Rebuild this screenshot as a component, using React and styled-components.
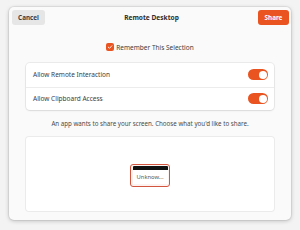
import styled, { createGlobalStyle } from "styled-components";

const GlobalStyle = createGlobalStyle`
  html, body {
    margin: 0;
    padding: 0;
    background: #f3f3f3;
  }
  body {
    font-family: "Noto Sans", "Open Sans", sans-serif;
    color: #3d3d3d;
  }
`;

const Page = styled.div`
  width: 300px;
  height: 230px;
  padding: 7px 9px 10px;
  box-sizing: border-box;
`;

const Dialog = styled.div`
  width: 282px;
  height: 213px;
  background: #fafafa;
  border-radius: 5px;
  box-shadow: 0 1px 4px rgba(0, 0, 0, 0.22), 0 0 0 1px rgba(0, 0, 0, 0.05);
  display: flex;
  flex-direction: column;
  box-sizing: border-box;
`;

const HeaderBar = styled.div`
  display: flex;
  align-items: center;
  justify-content: space-between;
  padding: 2px 2px 0 3px;
  height: 17px;
`;

const HeaderButton = styled.button`
  border: none;
  border-radius: 3px;
  height: 15px;
  padding: 0 ${(p) => (p.$wide ? "7px" : "6px")};
  font-family: inherit;
  font-size: 6.3px;
  font-weight: 700;
  background: ${(p) => (p.$primary ? "#e95420" : "#e6e6e6")};
  color: ${(p) => (p.$primary ? "#ffffff" : "#3d3d3d")};
  width: ${(p) => (p.$primary ? "31px" : "33px")};
`;

const Title = styled.div`
  font-size: 6.6px;
  font-weight: 700;
  color: #2e2e2e;
`;

const Body = styled.div`
  flex: 1;
  display: flex;
  flex-direction: column;
  padding: 0 17px 9px;
`;

const CheckRow = styled.label`
  display: flex;
  align-items: center;
  justify-content: center;
  gap: 2px;
  margin-top: 16px;
  font-size: 6.5px;
  height: 10px;
`;

const CheckBox = styled.span`
  width: 8px;
  height: 8px;
  border-radius: 2px;
  background: #e95420;
  display: flex;
  align-items: center;
  justify-content: center;
`;

const ListBox = styled.div`
  margin-top: 11px;
  background: #ffffff;
  border-radius: 4px;
  box-shadow: 0 0 0 1px rgba(0, 0, 0, 0.06), 0 1px 2px rgba(0, 0, 0, 0.08);
  display: flex;
  flex-direction: column;
`;

const ListRow = styled.div`
  height: 23.5px;
  display: flex;
  align-items: center;
  justify-content: space-between;
  padding: 0 6px 0 7px;
  font-size: 6.5px;
  border-top: ${(p) => (p.$first ? "none" : "1px solid #ececec")};
  box-sizing: border-box;
`;

const Toggle = styled.span`
  width: 20px;
  height: 11px;
  border-radius: 6px;
  background: #e95420;
  display: flex;
  align-items: center;
  justify-content: flex-end;
  padding: 1.5px;
  box-sizing: border-box;
`;

const Knob = styled.span`
  width: 8px;
  height: 8px;
  border-radius: 50%;
  background: #ffffff;
`;

const Hint = styled.div`
  text-align: center;
  font-size: 6.2px;
  color: #4a4a4a;
  margin-top: 9px;
`;

const SourceBox = styled.div`
  margin-top: 9px;
  flex: 1;
  background: #ffffff;
  border-radius: 3px;
  box-shadow: 0 0 0 1px rgba(0, 0, 0, 0.06);
  display: flex;
  align-items: center;
  justify-content: center;
`;

const WindowThumb = styled.div`
  width: 40px;
  height: 23px;
  border: 1.5px solid #d1553f;
  border-radius: 3px;
  padding: 1.5px;
  box-sizing: border-box;
  background: #fdf4f2;
  display: flex;
  flex-direction: column;
  margin-top: 2px;
`;

const ThumbBar = styled.div`
  height: 4px;
  background: #111111;
  border-radius: 1px 1px 0 0;
`;

const ThumbLabel = styled.div`
  flex: 1;
  display: flex;
  align-items: center;
  justify-content: center;
  font-size: 5.8px;
  color: #555555;
  background: #ffffff;
`;

const Check = () => (
  <svg width="6" height="6" viewBox="0 0 12 12">
    <path d="M2.5 6.2 L5 8.6 L9.6 3.6" fill="none" stroke="#fff" strokeWidth="1.8" strokeLinecap="round" strokeLinejoin="round" />
  </svg>
);

const App = () => {
  return (
    <>
      <GlobalStyle />
      <Page>
        <Dialog>
          <HeaderBar>
            <HeaderButton>Cancel</HeaderButton>
            <Title>Remote Desktop</Title>
            <HeaderButton $primary>Share</HeaderButton>
          </HeaderBar>
          <Body>
            <CheckRow>
              <CheckBox><Check /></CheckBox>
              Remember This Selection
            </CheckRow>
            <ListBox>
              <ListRow $first>
                Allow Remote Interaction
                <Toggle><Knob /></Toggle>
              </ListRow>
              <ListRow>
                Allow Clipboard Access
                <Toggle><Knob /></Toggle>
              </ListRow>
            </ListBox>
            <Hint>An app wants to share your screen. Choose what you'd like to share.</Hint>
            <SourceBox>
              <WindowThumb>
                <ThumbBar />
                <ThumbLabel>Unknow...</ThumbLabel>
              </WindowThumb>
            </SourceBox>
          </Body>
        </Dialog>
      </Page>
    </>
  );
};

export default App;
